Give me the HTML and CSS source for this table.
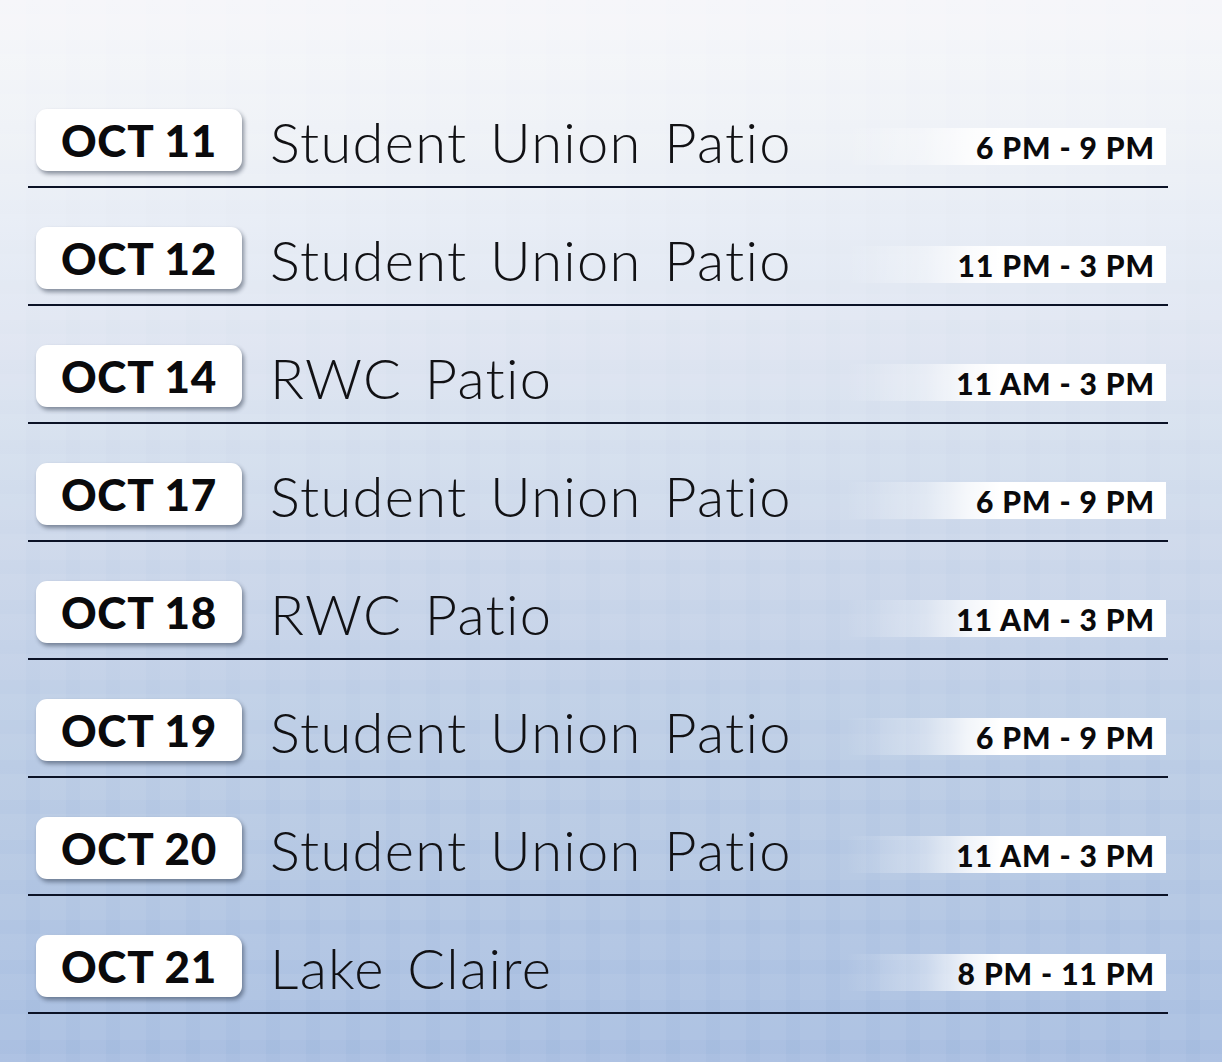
FILE: index.html
```html
<!DOCTYPE html>
<html lang="en">
<head>
<meta charset="utf-8">
<title>October Schedule</title>
<link rel="stylesheet" href="styles.css">
</head>
<body>
<main class="page">
  <ul class="schedule">
    <li class="event">
      <span class="date">OCT 11</span>
      <span class="place">Student Union Patio</span>
      <span class="time">6 PM - 9 PM</span>
    </li>
    <li class="event">
      <span class="date">OCT 12</span>
      <span class="place">Student Union Patio</span>
      <span class="time">11 PM - 3 PM</span>
    </li>
    <li class="event">
      <span class="date">OCT 14</span>
      <span class="place">RWC Patio</span>
      <span class="time">11 AM - 3 PM</span>
    </li>
    <li class="event">
      <span class="date">OCT 17</span>
      <span class="place">Student Union Patio</span>
      <span class="time">6 PM - 9 PM</span>
    </li>
    <li class="event">
      <span class="date">OCT 18</span>
      <span class="place">RWC Patio</span>
      <span class="time">11 AM - 3 PM</span>
    </li>
    <li class="event">
      <span class="date">OCT 19</span>
      <span class="place">Student Union Patio</span>
      <span class="time">6 PM - 9 PM</span>
    </li>
    <li class="event">
      <span class="date">OCT 20</span>
      <span class="place">Student Union Patio</span>
      <span class="time">11 AM - 3 PM</span>
    </li>
    <li class="event">
      <span class="date">OCT 21</span>
      <span class="place">Lake Claire</span>
      <span class="time">8 PM - 11 PM</span>
    </li>
  </ul>
</main>
</body>
</html>
```

FILE: styles.css
```css
html, body {
  margin: 0;
  padding: 0;
}

body {
  min-height: 1062px;
  font-family: "Lato", "Liberation Sans", sans-serif;
  color: #0c0c10;
  background-color: #c9d6ea;
  background-image:
    linear-gradient(90deg, rgba(255,255,255,0.05) 64%, rgba(255,255,255,0) 64%),
    linear-gradient(0deg, rgba(255,255,255,0.05) 64%, rgba(255,255,255,0) 64%),
    linear-gradient(180deg, #f5f6fa 0%, #eef1f7 12%, #dfe6f1 30%, #cbd7ea 50%, #b7c9e4 72%, #a5bcdf 100%);
  background-size: 40px 40px, 40px 40px, 100% 1062px;
  background-repeat: repeat, repeat, no-repeat;
}

.page {
  padding: 70px 0 0 28px;
  width: 1140px;
}

.schedule {
  list-style: none;
  margin: 0;
  padding: 0;
}

.event {
  display: flex;
  align-items: flex-start;
  height: 118px;
  box-sizing: border-box;
  padding: 39px 2px 0 8px;
  border-bottom: 2px solid #0b1226;
}

.date {
  flex: none;
  width: 206px;
  height: 62px;
  display: flex;
  align-items: center;
  justify-content: center;
  background: #ffffff;
  border-radius: 11px;
  box-shadow: 2px 3px 4px rgba(20, 30, 50, 0.45);
  font-weight: 900;
  font-size: 44px;
  letter-spacing: 0.8px;
  color: #0a0a0c;
}

.place {
  flex: 1;
  margin-left: 28px;
  margin-top: 2px;
  font-weight: 300;
  font-size: 56px;
  line-height: 62px;
  letter-spacing: 1.3px;
  word-spacing: 6px;
  color: #111114;
}

.time {
  flex: none;
  width: 320px;
  height: 37px;
  margin-top: 19px;
  box-sizing: border-box;
  padding-right: 11px;
  display: flex;
  align-items: center;
  justify-content: flex-end;
  background: linear-gradient(90deg, rgba(255,255,255,0) 0%, rgba(255,255,255,0.35) 25%, rgba(255,255,255,0.8) 38%, #ffffff 48%, #ffffff 100%);
  font-weight: 900;
  font-size: 30px;
  letter-spacing: 0.9px;
  word-spacing: 0;
  white-space: nowrap;
  color: #0a0a0c;
}
```
